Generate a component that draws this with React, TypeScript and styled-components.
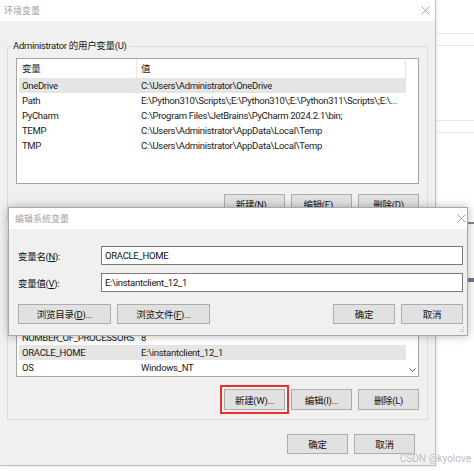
import React from "react";
import styled, { createGlobalStyle } from "styled-components";

const GlobalStyle = createGlobalStyle`
  html, body { margin: 0; padding: 0; background: #fff; }
  body {
    font-family: Roboto, "Noto Sans CJK SC", sans-serif;
    font-size: 9.5px;
    letter-spacing: -0.3px;
    color: #000;
  }
  * { box-sizing: border-box; }
`;

const Page = styled.div`
  position: relative;
  width: 474px;
  height: 471px;
  display: flex;
  align-items: flex-start;
  overflow: hidden;
  background: #fff;
`;

const Window = styled.div`
  flex: none;
  width: 436px;
  height: 466px;
  display: flex;
  flex-direction: column;
  background: #f0f0f0;
  border-right: 1px solid #c2c2c2;
  border-bottom: 1px solid #c2c2c2;
  box-shadow: 1px 1px 3px rgba(0, 0, 0, 0.1);
`;

const TitleBar = styled.div<{ $pl: number; $pr: number }>`
  flex: none;
  height: 21px;
  display: flex;
  align-items: center;
  justify-content: space-between;
  background: #fff;
  padding: 0 ${(p) => p.$pr}px 0 ${(p) => p.$pl}px;
  color: #a2a2a2;
  font-size: 9px;
  letter-spacing: 0;
`;

const CloseGlyph = styled.svg`
  display: block;
  width: 9px;
  height: 9px;
`;

const Close = () => (
  <CloseGlyph viewBox="0 0 9 9">
    <path d="M0.5 0.5 L8.5 8.5 M8.5 0.5 L0.5 8.5" stroke="#9c9c9c" strokeWidth="0.9" fill="none" />
  </CloseGlyph>
);

const WindowBody = styled.div`
  flex: 1;
  display: flex;
  flex-direction: column;
  padding: 18px 7px 10px 7px;
`;

const Group = styled.fieldset<{ $mt?: number }>`
  margin: ${(p) => p.$mt ?? 0}px 0 0 0;
  padding: 0;
  min-width: 0;
  border: 1px solid #dcdcdc;
`;

const Legend = styled.legend`
  margin-left: 3px;
  padding: 0 2px;
  height: 14px;
  line-height: 14px;
  color: #1a1a1a;
`;

const GroupContent = styled.div<{ $pb: number }>`
  display: flex;
  flex-direction: column;
  padding: 5px 8px ${(p) => p.$pb}px 8px;
`;

const ListBox = styled.div<{ $h: number }>`
  height: ${(p) => p.$h}px;
  display: flex;
  background: #fff;
  border: 1px solid #a5a5a5;
`;

const ListMain = styled.div`
  flex: 1;
  min-width: 0;
  display: flex;
  flex-direction: column;
  padding-left: 2px;
`;

const ScrollCol = styled.div`
  flex: none;
  width: 12px;
  display: flex;
  flex-direction: column;
  justify-content: flex-end;
  align-items: center;
  padding-bottom: 4px;
`;

const Columns = styled.div<{ $h: number; $selected?: boolean }>`
  display: grid;
  grid-template-columns: 118px 1fr;
  height: ${(p) => p.$h}px;
  line-height: ${(p) => p.$h}px;
  background: ${(p) => (p.$selected ? "#e5e5e5" : "transparent")};
  color: #1a1a1a;
  white-space: nowrap;
`;

const HeadCell = styled.div<{ $pl: number }>`
  padding-left: ${(p) => p.$pl}px;
  border-right: 1px solid #e5e5e5;
  overflow: hidden;
`;

const Cell = styled.div<{ $pl: number }>`
  padding-left: ${(p) => p.$pl}px;
  overflow: hidden;
`;

const ButtonRow = styled.div<{ $mt: number; $mr?: number }>`
  display: flex;
  justify-content: flex-end;
  gap: 6px;
  margin-top: ${(p) => p.$mt}px;
  margin-right: ${(p) => p.$mr ?? 0}px;
`;

const Button = styled.button<{ $w: number; $h?: number; $highlight?: boolean }>`
  flex: none;
  width: ${(p) => p.$w}px;
  height: ${(p) => p.$h ?? 20}px;
  padding: 0;
  margin: 0;
  background: #e1e1e1;
  border: 1px solid #adadad;
  border-radius: 0;
  font-family: inherit;
  font-size: inherit;
  letter-spacing: inherit;
  color: #111;
  outline: ${(p) => (p.$highlight ? "2px solid #e8302c" : "none")};
  outline-offset: 2px;
`;

const ScrollArrow = styled.svg`
  display: block;
  width: 7px;
  height: 4px;
`;

const Strip = styled.div`
  flex: 1;
  align-self: stretch;
  display: flex;
  flex-direction: column;
  padding-top: 33px;
`;

const Rule = styled.div<{ $mt: number; $h?: number; $c?: string }>`
  margin-top: ${(p) => p.$mt}px;
  height: ${(p) => p.$h ?? 1}px;
  background: ${(p) => p.$c ?? "#e4e4e4"};
`;

const Dialog = styled.div`
  position: absolute;
  left: 8px;
  top: 207px;
  width: 460px;
  height: 129px;
  display: flex;
  flex-direction: column;
  background: #f0f0f0;
  border: 1px solid #a9a9a9;
  box-shadow: 0 0 9px rgba(0, 0, 0, 0.28);
`;

const DialogBody = styled.div`
  flex: 1;
  display: flex;
  flex-direction: column;
  padding: 17px 4px 11px 9px;
`;

const Form = styled.div`
  display: grid;
  grid-template-columns: 83px 1fr;
  row-gap: 8px;
  align-items: center;
`;

const Label = styled.label`
  color: #111;
  white-space: nowrap;
`;

const Input = styled.input`
  height: 19px;
  width: 100%;
  margin: 0;
  padding: 0 0 0 3px;
  border: 1px solid #7a7a7a;
  background: #fff;
  font-family: inherit;
  font-size: inherit;
  letter-spacing: inherit;
  color: #111;
  outline: none;
`;

const DialogButtons = styled.div`
  display: flex;
  justify-content: space-between;
  margin-top: 12px;
`;

const BtnGroup = styled.div`
  display: flex;
  gap: 6px;
`;

const Grip = styled.svg`
  position: absolute;
  right: 2px;
  bottom: 2px;
  width: 7px;
  height: 7px;
`;

const Watermark = styled.div`
  position: absolute;
  right: 3px;
  bottom: 7px;
  font-size: 10px;
  letter-spacing: 0;
  color: rgba(175, 175, 175, 0.85);
  text-shadow: 0 0 2px #fff;
  white-space: nowrap;
`;

type Row = { name: string; value: string; selected?: boolean };

const userVars: Row[] = [
  { name: "OneDrive", value: "C:\\Users\\Administrator\\OneDrive", selected: true },
  { name: "Path", value: "E:\\Python310\\Scripts\\;E:\\Python310\\;E:\\Python311\\Scripts\\;E:\\..." },
  { name: "PyCharm", value: "C:\\Program Files\\JetBrains\\PyCharm 2024.2.1\\bin;" },
  { name: "TEMP", value: "C:\\Users\\Administrator\\AppData\\Local\\Temp" },
  { name: "TMP", value: "C:\\Users\\Administrator\\AppData\\Local\\Temp" },
];

const sysVars: Row[] = [
  { name: "ComSpec", value: "C:\\Windows\\system32\\cmd.exe" },
  { name: "DriverData", value: "C:\\Windows\\System32\\Drivers\\DriverData" },
  { name: "JAVA_HOME", value: "C:\\Program Files\\Java\\jdk1.8.0_201" },
  { name: "MAVEN_HOME", value: "E:\\apache-maven-3.6.3" },
  { name: "NUMBER_OF_PROCESSORS", value: "8" },
  { name: "ORACLE_HOME", value: "E:\\instantclient_12_1", selected: true },
  { name: "OS", value: "Windows_NT" },
];

const VarList = ({ rows, height, scroll }: { rows: Row[]; height: number; scroll?: boolean }) => (
  <ListBox $h={height}>
    <ListMain>
      <Columns $h={19}>
        <HeadCell $pl={3}>变量</HeadCell>
        <HeadCell $pl={4}>值</HeadCell>
      </Columns>
      {rows.map((r) => (
        <Columns key={r.name} $h={15} $selected={r.selected}>
          <Cell $pl={3}>{r.name}</Cell>
          <Cell $pl={4}>{r.value}</Cell>
        </Columns>
      ))}
    </ListMain>
    <ScrollCol>
      {scroll && (
        <ScrollArrow viewBox="0 0 7 4">
          <path d="M0.5 0.5 L3.5 3.5 L6.5 0.5" stroke="#555" strokeWidth="1" fill="none" />
        </ScrollArrow>
      )}
    </ScrollCol>
  </ListBox>
);

export default function App() {
  return (
    <>
      <GlobalStyle />
      <Page>
        <Window>
          <TitleBar $pl={4} $pr={5}>
            <span>环境变量</span>
            <Close />
          </TitleBar>
          <WindowBody>
            <Group>
              <Legend>Administrator 的用户变量(U)</Legend>
              <GroupContent $pb={6}>
                <VarList rows={userVars} height={126} />
                <ButtonRow $mt={10}>
                  <Button $w={61}>新建(N)...</Button>
                  <Button $w={61}>编辑(E)...</Button>
                  <Button $w={61}>删除(D)</Button>
                </ButtonRow>
              </GroupContent>
            </Group>
            <Group $mt={10}>
              <Legend>系统变量(S)</Legend>
              <GroupContent $pb={9}>
                <VarList rows={sysVars} height={127} scroll />
                <ButtonRow $mt={12}>
                  <Button $w={61} $h={21} $highlight>新建(W)...</Button>
                  <Button $w={61} $h={21}>编辑(I)...</Button>
                  <Button $w={61} $h={21}>删除(L)</Button>
                </ButtonRow>
              </GroupContent>
            </Group>
            <ButtonRow $mt={14} $mr={13}>
              <Button $w={61}>确定</Button>
              <Button $w={61}>取消</Button>
            </ButtonRow>
          </WindowBody>
        </Window>

        <Strip>
          <Rule $mt={0} />
          <Rule $mt={11} />
          <Rule $mt={74} />
          <Rule $mt={11} />
          <Rule $mt={89} $h={2} $c="#7d8a98" />
          <Rule $mt={54} $h={4} $c="#6f7883" />
        </Strip>

        <Dialog>
          <TitleBar $pl={6} $pr={1}>
            <span>编辑系统变量</span>
            <Close />
          </TitleBar>
          <DialogBody>
            <Form>
              <Label htmlFor="var-name">
                变量名(<u>N</u>):
              </Label>
              <Input id="var-name" defaultValue="ORACLE_HOME" />
              <Label htmlFor="var-value">
                变量值(<u>V</u>):
              </Label>
              <Input id="var-value" defaultValue="E:\instantclient_12_1" />
            </Form>
            <DialogButtons>
              <BtnGroup>
                <Button $w={93}>
                  浏览目录(<u>D</u>)...
                </Button>
                <Button $w={93}>
                  浏览文件(<u>F</u>)...
                </Button>
              </BtnGroup>
              <BtnGroup>
                <Button $w={62}>确定</Button>
                <Button $w={62}>取消</Button>
              </BtnGroup>
            </DialogButtons>
          </DialogBody>
          <Grip viewBox="0 0 7 7">
            <g fill="#b5b5b5">
              <rect x="5" y="1" width="1" height="1" />
              <rect x="3" y="3" width="1" height="1" />
              <rect x="5" y="3" width="1" height="1" />
              <rect x="1" y="5" width="1" height="1" />
              <rect x="3" y="5" width="1" height="1" />
              <rect x="5" y="5" width="1" height="1" />
            </g>
          </Grip>
        </Dialog>

        <Watermark>CSDN @kyolove</Watermark>
      </Page>
    </>
  );
}
